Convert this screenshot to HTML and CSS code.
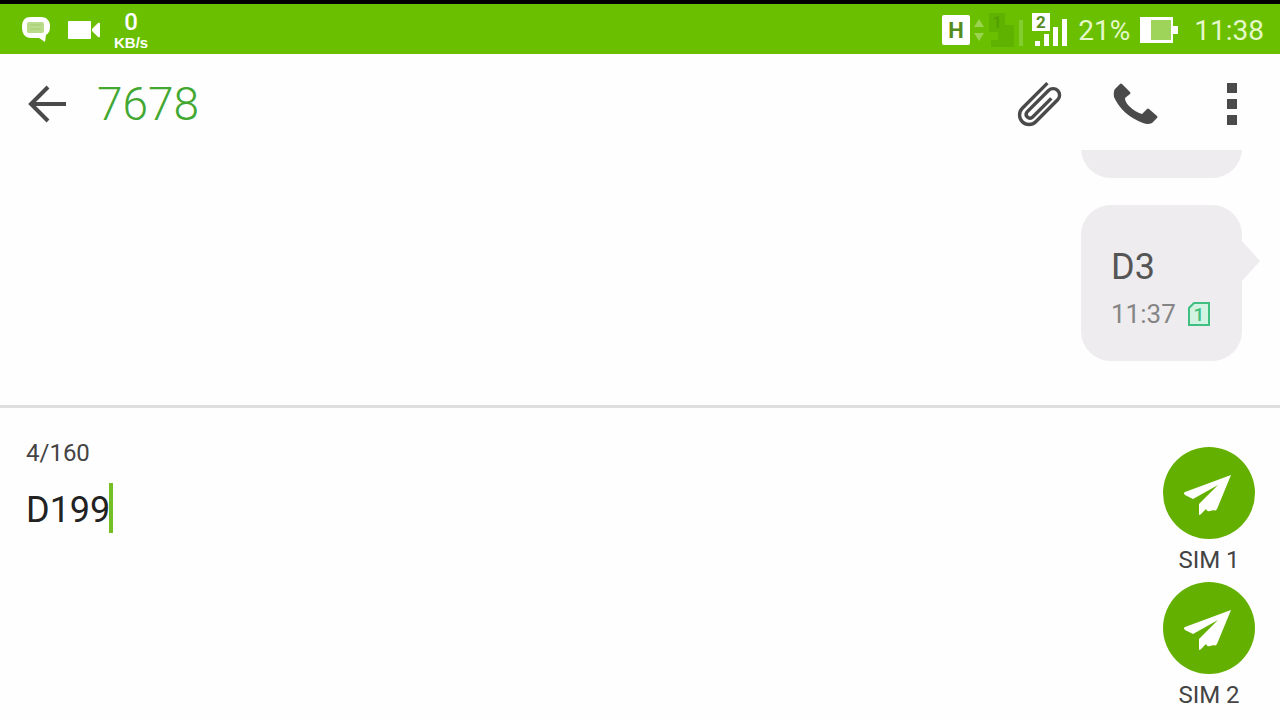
FILE: index.html
```
<!DOCTYPE html>
<html lang="en">
<head>
<meta charset="UTF-8">
<meta name="viewport" content="width=device-width, initial-scale=1.0">
<title>7678</title>
<link rel="stylesheet" href="styles.css">
</head>
<body>

<!-- status bar -->
<div class="status-bar">
  <div class="status-left">
    <svg width="28" height="28" viewBox="0 0 28 28">
      <path d="M9 1h10c6 0 9 4 9 9 0 5-1 7-4 9l-1 7-6-4H9c-6 0-9-4-9-11S3 1 9 1z" fill="#fff"/>
      <rect x="5" y="6" width="17" height="11" rx="2" fill="#b9dc8c"/>
      <path d="M8 9h11M8 13h11" stroke="#a3cd70"/>
    </svg>
    <svg width="32" height="20" viewBox="0 0 32 20">
      <rect y="1" width="23" height="18" rx="1" fill="#fff"/>
      <path d="M24 9l6-6q2-1 2 1v12q0 2-2 1l-6-6z" fill="#fff"/>
    </svg>
    <div class="speed">
      <span class="speed-value">0</span>
      <span class="speed-unit">KB/s</span>
    </div>
  </div>
  <div class="status-right">
    <div class="network">
      <svg width="28" height="30" viewBox="0 0 28 30">
        <rect width="28" height="30" rx="2" fill="#fff"/>
        <text class="badge" x="14" y="23" font-size="22">H</text>
      </svg>
      <svg width="10" height="24" viewBox="0 0 10 24">
        <path d="M5 1l5 8H0zM5 23l5-8H0z" fill="#9ad450"/>
      </svg>
      <svg width="36" height="34" viewBox="0 0 36 34">
        <path d="M1 0h16v12h9v22H3v-7h7v-8H1z" fill="#5fb200"/>
        <text class="badge dim" x="9" y="15" font-size="16">1</text>
        <rect x="31" y="7" width="4" height="26" fill="#84cd30"/>
      </svg>
    </div>
    <svg width="36" height="34" viewBox="0 0 36 34">
      <path d="M0 0h18v18H0z" fill="#fff"/>
      <text class="badge" x="9" y="15" font-size="17">2</text>
      <path d="M3 28h5v5H3zM12 21h5v12h-5zM21 14h5v19h-5zM30 6h5v27h-5z" fill="#fff"/>
    </svg>
    <span>21%</span>
    <svg class="battery" width="38" height="26" viewBox="0 0 38 26">
      <path d="M0 0h33v9h5v8h-5v9H0z" fill="#fff"/>
      <rect x="11" y="3" width="20" height="20" fill="#9fd45b"/>
    </svg>
    <span>11:38</span>
  </div>
</div>

<!-- title bar -->
<header class="header">
  <button class="icon-button" aria-label="Back">
    <svg width="38" height="40" viewBox="0 0 38 40">
      <path d="M20 3L3 20l17 17M3 20h35" fill="none" stroke="#4a4a4a" stroke-width="4"/>
    </svg>
  </button>
  <h1>7678</h1>
  <div class="actions">
    <button class="icon-button" aria-label="Attach">
      <svg width="48" height="48" viewBox="0 0 48 48">
        <path transform="translate(24 24) rotate(45)" d="M-9.5-20V15.5A9.5 9.5 0 0 0 9.5 15.5V-15.5A6.5 6.5 0 0 0-3.5-15.5V15A3.8 3.8 0 0 0 4 15V-12" fill="none" stroke="#4a4a4a" stroke-width="3.4"/>
      </svg>
    </button>
    <button class="icon-button" aria-label="Call">
      <svg width="48" height="44" viewBox="0 0 48 44">
        <path d="M8 2q1-1 2 0l8 8q1 1 0 2l-5 4q0 4 4 8 6 6 13 8l5-5q1-1 2 0l8 7q1 1 0 2l-5 5q-4 2-9 0Q10 33 2 15 1 8 4 6z" fill="#4a4a4a"/>
      </svg>
    </button>
    <button class="icon-button" aria-label="More">
      <svg width="12" height="42" viewBox="0 0 12 42">
        <path d="M1 0h10v10H1zM1 16h10v10H1zM1 32h10v10H1z" fill="#4a4a4a"/>
      </svg>
    </button>
  </div>
</header>

<!-- messages -->
<main class="thread">
  <div class="bubble"></div>
  <div class="bubble tail">
    <div class="text">D3</div>
    <div class="meta">
      <span>11:37</span>
      <svg width="24" height="26" viewBox="0 0 24 26">
        <path d="M7 2h15v22H2V7z" fill="#d2f3e2" stroke="#3fbf82" stroke-width="2"/>
        <text class="badge sim" x="12" y="20" font-size="19">1</text>
      </svg>
    </div>
  </div>
</main>

<!-- compose box -->
<form class="compose">
  <div class="entry">
    <label for="message">4/160</label>
    <div class="field">
      <input id="message" type="text" value="D199" size="4">
      <span class="caret"></span>
    </div>
  </div>
  <div class="send-list">
    <button type="button" class="send">
      <svg width="92" height="92" viewBox="0 0 92 92">
        <circle cx="46" cy="46" r="46" fill="#64b000"/>
        <path d="M68 28L22 45q-2 1 0 3l8 4 25-14-19 19v10q0 2 2 0l5-5q1 3 4 2l4-1q1 2 3-1z" fill="#fff"/>
      </svg>
      <span>SIM 1</span>
    </button>
    <button type="button" class="send">
      <svg width="92" height="92" viewBox="0 0 92 92">
        <circle cx="46" cy="46" r="46" fill="#64b000"/>
        <path d="M68 28L22 45q-2 1 0 3l8 4 25-14-19 19v10q0 2 2 0l5-5q1 3 4 2l4-1q1 2 3-1z" fill="#fff"/>
      </svg>
      <span>SIM 2</span>
    </button>
  </div>
</form>

</body>
</html>
```
FILE: styles.css
```
* {
  box-sizing: border-box;
}

body {
  margin: 0;
  height: 100vh;
  display: flex;
  flex-direction: column;
  background: #fefefe;
  color: #444;
  font-family: Roboto, sans-serif;
}

svg {
  display: block;
  overflow: visible;
}

button,
input {
  border: 0;
  padding: 0;
  background: none;
  color: inherit;
  font-family: inherit;
}

.badge {
  fill: #568c1c;
  font-weight: bold;
  text-anchor: middle;
}

.badge.dim {
  fill: #52a000;
}

.badge.sim {
  fill: #3fbf82;
  font-weight: 500;
}

/* status bar */
.status-bar {
  display: flex;
  justify-content: space-between;
  height: 54px;
  padding: 2px 16px 0 22px;
  border-top: 4px solid #000;
  background: #6abf00;
  color: #e4f8c8;
  font-size: 28px;
}

.status-left,
.status-right,
.network {
  display: flex;
  align-items: center;
}

.status-left {
  gap: 18px;
  color: #fff;
}

.status-right {
  gap: 10px;
}

.network {
  gap: 4px;
  margin-right: -2px;
}

.battery {
  margin-right: 6px;
}

.speed {
  display: flex;
  flex-direction: column;
  align-items: center;
  margin-left: -4px;
}

.speed-value {
  font-size: 24px;
  font-weight: 500;
  line-height: 24px;
}

.speed-unit {
  font-family: "Liberation Sans", sans-serif;
  font-size: 15px;
  font-weight: bold;
  line-height: 17px;
}

/* title bar */
.header {
  display: flex;
  align-items: center;
  height: 96px;
  padding: 4px 42px 0 28px;
}

.header h1 {
  margin: 0 0 0 31px;
  color: #43a832;
  font-size: 46px;
  font-weight: 300;
}

.actions {
  display: flex;
  align-items: center;
  gap: 48px;
  margin-left: auto;
}

.actions .icon-button:last-child {
  margin-left: 18px;
}

/* messages */
.thread {
  flex: 1;
  min-height: 0;
  display: flex;
  flex-direction: column;
  align-items: flex-end;
  justify-content: flex-end;
  gap: 27px;
  padding: 0 38px 44px;
  overflow: hidden;
}

.bubble {
  flex: none;
  position: relative;
  min-width: 161px;
  min-height: 156px;
  padding: 40px 30px 32px;
  border-radius: 30px;
  background: #eeecee;
}

.tail::after {
  content: "";
  position: absolute;
  top: 36px;
  left: 100%;
  border: 20px solid transparent;
  border-left: 18px solid #eeecee;
  border-right: 0;
}

.text {
  color: #555;
  font-size: 36px;
  line-height: 44px;
}

.meta {
  display: flex;
  align-items: center;
  gap: 11px;
  margin-top: 10px;
  color: #858585;
  font-size: 26px;
  line-height: 30px;
}

/* compose box */
.compose {
  display: flex;
  justify-content: space-between;
  padding: 31px 25px 3px 26px;
  border-top: 3px solid #dedede;
}

.entry label {
  display: block;
  font-size: 24px;
  line-height: 28px;
}

.field {
  display: flex;
  align-items: center;
  margin-top: 16px;
}

.field input {
  field-sizing: content;
  padding-top: 4px;
  color: #222;
  font-size: 36px;
  outline: none;
}

.caret {
  width: 4px;
  height: 50px;
  margin-left: -1px;
  background: #74bf24;
}

.send-list {
  padding-top: 8px;
}

.send {
  display: block;
  font-size: 24px;
  line-height: 43px;
}

.send span {
  display: block;
}
```
